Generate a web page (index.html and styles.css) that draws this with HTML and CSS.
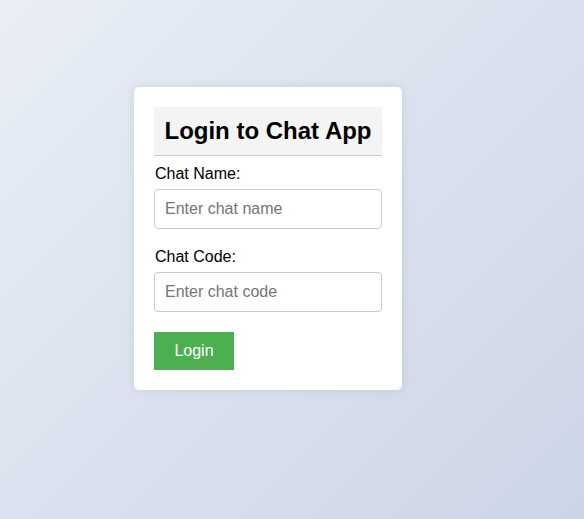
FILE: index.html
```html
<!DOCTYPE html>
<html lang="en">
<head>
    <meta charset="UTF-8">
    <meta name="viewport" content="width=device-width, initial-scale=1.0">
    <title>Login to Chat App</title>
    <link rel="stylesheet" href="styles.css">
</head>
<body>
    <div class="login-box">
        <h2 class="title">Login to Chat App</h2>
        <form class="login-form">
            <label for="chatName">Chat Name:</label>
            <input type="text" id="chatName" placeholder="Enter chat name">
            <label for="chatCode">Chat Code:</label>
            <input type="text" id="chatCode" placeholder="Enter chat code">
            <button type="button">Login</button>
        </form>
    </div>
</body>
</html>
```

FILE: styles.css
```css
html,body{margin:0; padding:0;}
body{
    min-height:100vh;
    box-sizing:border-box;
    padding:87px 0 0 134px;
    font-family:"Liberation Sans", Arial, sans-serif;
    background:linear-gradient(135deg, #e9eef6 0%, #ccd5e6 100%);
}

.login-box{
    width:228px;
    padding:20px;
    background:#fff;
    border-radius:5px;
    box-shadow:0 0 10px rgba(0,0,0,0.1);
}

.title{
    margin:0;
    padding:10px 0;
    height:28px;
    line-height:28px;
    font-size:24px;
    text-align:center;
    color:#000;
    background:#f4f4f4;
    border-bottom:1px solid #ccc;
}

.login-form label{display:block; margin-top:9px; padding-left:1px; font-size:16px; line-height:18px; color:#000;}
.login-form input{
    display:block;
    width:100%;
    box-sizing:border-box;
    height:40px;
    margin:6px 0 0;
    padding:10px;
    font-size:16px;
    font-family:inherit;
    border:1px solid #ccc;
    border-radius:4px;
}
.login-form input + label{margin-top:19px;}
.login-form input::placeholder{color:#757575;}

.login-form button{
    display:block;
    margin-top:20px;
    width:80px;
    height:38px;
    border:none;
    background:#4caf50;
    color:#fff;
    font-size:16px;
    font-family:inherit;
}
```
